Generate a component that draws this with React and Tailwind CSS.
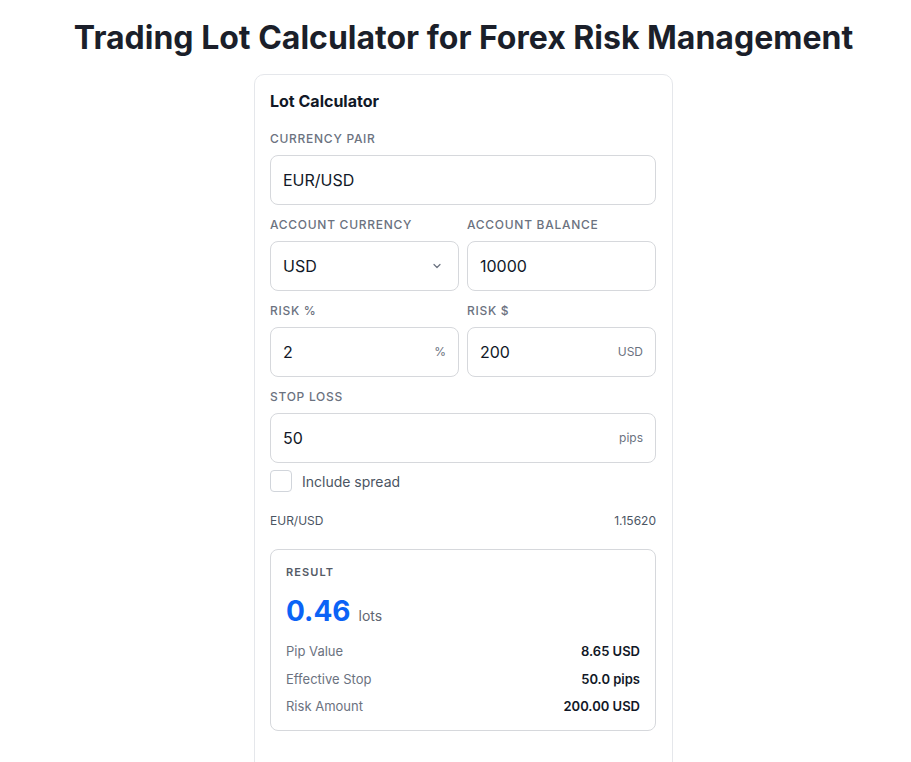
import React from "react";

const Label = ({ children }) => (
  <p className="text-[12px] leading-4 font-medium tracking-[0.06em] uppercase text-[#6b7280] mb-2">
    {children}
  </p>
);

const Field = ({ value, suffix, chevron }) => (
  <div className="h-[50px] border border-[#d6d8dc] rounded-[8px] flex items-center justify-between px-[12px] bg-white">
    <span className="text-[16px] text-[#111827]">{value}</span>
    {suffix && <span className="text-[12px] text-[#6b7280]">{suffix}</span>}
    {chevron && (
      <svg width="10" height="10" viewBox="0 0 10 10" className="mr-[4px]">
        <path d="M2 3.5 L5 6.5 L8 3.5" fill="none" stroke="#6b7280" strokeWidth="1.2" strokeLinecap="round" strokeLinejoin="round" />
      </svg>
    )}
  </div>
);

const Row = ({ label, value }) => (
  <div className="flex justify-between items-center h-[27.5px]">
    <span className="text-[13px] text-[#6b7280]">{label}</span>
    <span className="text-[13px] font-semibold text-[#111827]">{value}</span>
  </div>
);

const App = () => {
  return (
    <div className="min-h-screen bg-white pl-[16px] font-['Inter',sans-serif]">
      <div className="flex flex-col items-center">
        <h1 className="text-[32px] leading-[38px] font-bold text-[#1b1f2a] mt-[19px] mb-[17px]">
          Trading Lot Calculator for Forex Risk Management
        </h1>
        <div className="w-[419px] border border-[#e5e7eb] rounded-[10px] pl-[15px] pr-[16px] pt-[14px] pb-[40px]">
          <h2 className="text-[16px] leading-6 font-bold text-[#111827] mb-[18px]">Lot Calculator</h2>

          <Label>Currency Pair</Label>
          <Field value="EUR/USD" />

          <div className="grid grid-cols-2 gap-x-[8px] mt-[12px]">
            <div>
              <Label>Account Currency</Label>
              <Field value="USD" chevron />
            </div>
            <div>
              <Label>Account Balance</Label>
              <Field value="10000" />
            </div>
          </div>

          <div className="grid grid-cols-2 gap-x-[8px] mt-[12px]">
            <div>
              <Label>Risk %</Label>
              <Field value="2" suffix="%" />
            </div>
            <div>
              <Label>Risk $</Label>
              <Field value="200" suffix="USD" />
            </div>
          </div>

          <div className="mt-[12px]">
            <Label>Stop Loss</Label>
            <Field value="50" suffix="pips" />
          </div>

          <label className="flex items-center gap-[10px] mt-[7px]">
            <span className="w-[22px] h-[22px] border border-[#d1d5db] rounded-[4px] bg-white" />
            <span className="text-[14px] text-[#4b5563]">Include spread</span>
          </label>

          <div className="flex justify-between items-center mt-[20px] text-[12px] text-[#4b5563]">
            <span>EUR/USD</span>
            <span>1.15620</span>
          </div>

          <div className="mt-[19px] border border-[#d6d8dc] rounded-[8px] px-[15px] pt-[14px] pb-[9px]">
            <p className="text-[11px] leading-4 font-semibold tracking-[0.1em] text-[#555b66]">RESULT</p>
            <div className="flex items-baseline gap-[8px] mt-[14px] mb-[10px]">
              <span className="text-[28px] leading-[34px] font-bold text-[#0b63f6]">0.46</span>
              <span className="text-[14px] text-[#5f6672]">lots</span>
            </div>
            <Row label="Pip Value" value="8.65 USD" />
            <Row label="Effective Stop" value="50.0 pips" />
            <Row label="Risk Amount" value="200.00 USD" />
          </div>
        </div>
      </div>
    </div>
  );
};

export default App;
